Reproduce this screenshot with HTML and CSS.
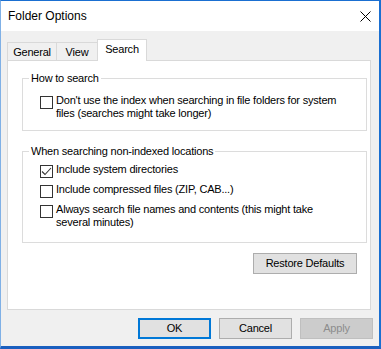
FILE: index.html
```html
<!DOCTYPE html>
<html lang="en">
<head>
<meta charset="utf-8">
<title>Folder Options</title>
<link rel="stylesheet" href="styles.css">
</head>
<body>
<div class="window">
  <div class="titlebar">
    <span class="title">Folder Options</span>
    <svg class="close" width="11" height="11" viewBox="0 0 11 11"><path d="M0.5 0.5 L10.5 10.5 M10.5 0.5 L0.5 10.5" stroke="#000" stroke-width="1" fill="none"/></svg>
  </div>
  <div class="client">
    <div class="tabs">
      <div class="tab tab-general">General</div>
      <div class="tab tab-view">View</div>
      <div class="tab tab-search active">Search</div>
    </div>
    <div class="panel">
      <fieldset class="group group-how">
        <legend>How to search</legend>
        <div class="check">
          <span class="box"></span>
          <span class="label">Don't use the index when searching in file folders for system<br>files (searches might take longer)</span>
        </div>
      </fieldset>
      <fieldset class="group group-non">
        <legend>When searching non-indexed locations</legend>
        <div class="checks">
          <div class="check">
            <span class="box checked"><svg width="11" height="11" viewBox="0 0 11 11"><path d="M1 5.5 L4 8.5 L10 2" stroke="#333" stroke-width="1.1" fill="none"/></svg></span>
            <span class="label">Include system directories</span>
          </div>
          <div class="check">
            <span class="box"></span>
            <span class="label">Include compressed files (ZIP, CAB...)</span>
          </div>
          <div class="check">
            <span class="box"></span>
            <span class="label">Always search file names and contents (this might take<br>several minutes)</span>
          </div>
        </div>
      </fieldset>
      <div class="restore-row">
        <button class="btn btn-restore" type="button">Restore Defaults</button>
      </div>
    </div>
    <div class="buttons">
      <button class="btn btn-default" type="button">OK</button>
      <button class="btn" type="button">Cancel</button>
      <button class="btn btn-disabled" type="button">Apply</button>
    </div>
  </div>
</div>
</body>
</html>
```

FILE: styles.css
```css
html, body {
  margin: 0;
  padding: 0;
  background: #ffffff;
}

body {
  font-family: "Liberation Sans", Arial, sans-serif;
  font-size: 11px;
  letter-spacing: -0.2px;
  color: #000;
}

.window {
  box-sizing: border-box;
  width: 381px;
  height: 349px;
  border-top: 1px solid #1a6fd1;
  border-left: 1px solid #7fb0e6;
  border-right: 2px solid #1a6fd1;
  border-bottom: 3px solid #1a5fbf;
  display: flex;
  flex-direction: column;
}

.titlebar {
  height: 30px;
  flex: none;
  background: #ffffff;
  display: flex;
  align-items: center;
  justify-content: space-between;
  padding: 0 8px 0 7px;
}

.title {
  font-size: 12px;
  letter-spacing: 0;
  line-height: 14px;
}

.close {
  display: block;
}

.client {
  flex: 1;
  background: #f0f0f0;
  padding: 8px 6px 0 6px;
  display: flex;
  flex-direction: column;
}

.tabs {
  height: 21px;
  display: flex;
  align-items: flex-end;
}

.tab {
  box-sizing: border-box;
  height: 18px;
  border: 1px solid #d9d9d9;
  border-bottom: none;
  background: #f0f0f0;
  text-align: center;
  line-height: 16px;
  padding-top: 1px;
  white-space: nowrap;
}

.tab-general { width: 50px; }
.tab-view { width: 42px; margin-left: -1px; }
.tab-search { width: 50px; margin-left: -1px; }

.tab.active {
  height: 22px;
  margin-bottom: -1px;
  background: #ffffff;
  position: relative;
  z-index: 1;
  line-height: 17px;
}

.panel {
  box-sizing: border-box;
  width: 364px;
  height: 250px;
  background: #ffffff;
  border: 1px solid #d9d9d9;
  display: flex;
  flex-direction: column;
}

.group {
  box-sizing: border-box;
  width: 345px;
  margin: 0 0 0 14px;
  border: 1px solid #dcdcdc;
  padding: 0 0 0 6px;
  min-width: 0;
}

.group legend {
  padding: 0 2px;
  line-height: 13px;
  white-space: nowrap;
}

.group-how {
  margin-top: 11px;
  padding-top: 9px;
  padding-bottom: 10px;
}

.group-non {
  margin-top: 14px;
  padding-top: 5px;
  padding-bottom: 13px;
}

.checks {
  display: flex;
  flex-direction: column;
  gap: 5px;
}

.check {
  display: flex;
  align-items: flex-start;
  margin-left: 11px;
  line-height: 13px;
  white-space: nowrap;
}

.box {
  box-sizing: border-box;
  flex: none;
  width: 13px;
  height: 13px;
  border: 1px solid #333333;
  background: #ffffff;
  margin-top: 2px;
  margin-right: 3px;
  display: flex;
  align-items: center;
  justify-content: center;
}

.box svg {
  display: block;
}

.restore-row {
  width: 345px;
  margin: 10px 0 0 14px;
  display: flex;
  justify-content: flex-end;
}

.btn {
  box-sizing: border-box;
  height: 21px;
  border: 1px solid #adadad;
  background: #e1e1e1;
  font-family: "Liberation Sans", Arial, sans-serif;
  font-size: 11px;
  letter-spacing: -0.2px;
  color: #000;
  padding: 0;
  margin: 0;
  line-height: 17px;
  width: 73px;
}

.btn-restore {
  width: 104px;
  margin-right: 10px;
}

.buttons {
  margin-top: 8px;
  display: flex;
  justify-content: flex-end;
  gap: 8px;
}

.btn-default {
  border: 2px solid #0078d7;
}

.btn-disabled {
  background: #cccccc;
  border-color: #bfbfbf;
  color: #8d8d8d;
}
```
